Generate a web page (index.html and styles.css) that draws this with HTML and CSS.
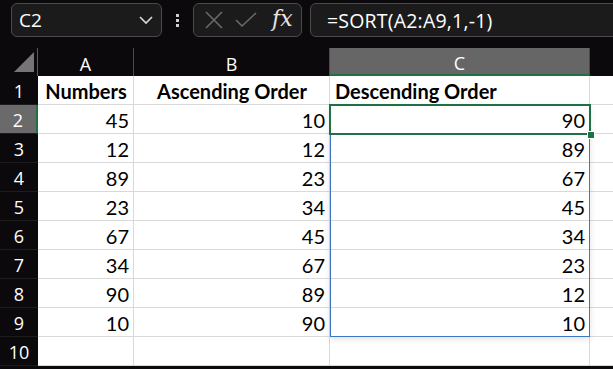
FILE: index.html
```html
<!DOCTYPE html>
<html lang="en">
<head>
    <meta charset="UTF-8">
    <title>SORT descending</title>
    <link rel="stylesheet" href="styles.css">
</head>
<body>
    <div class="toolbar">
        <div class="namebox">
            <span>C2</span>
            <svg width="16" height="10" viewBox="0 0 16 10"><path d="M2 2 L8 8 L14 2" fill="none" stroke="#d8d8d8" stroke-width="1.6"/></svg>
        </div>
        <div class="grip"><i></i><i></i><i></i></div>
        <div class="fxbox">
            <svg width="22" height="22" viewBox="0 0 22 22"><path d="M3 3 L19 19 M19 3 L3 19" stroke="#6a6a6a" stroke-width="1.6"/></svg>
            <svg width="24" height="22" viewBox="0 0 24 22"><path d="M2 11 L8 17 L22 4" fill="none" stroke="#6a6a6a" stroke-width="1.6"/></svg>
            <span class="fx">fx</span>
        </div>
        <div class="formula">=SORT(A2:A9,1,-1)</div>
    </div>

    <div class="sheet">
        <div class="corner"><span class="tri"></span></div>
        <div class="colhead">A</div>
        <div class="colhead">B</div>
        <div class="colhead active">C</div>
        <div class="colhead last"></div>
    </div>
    <div class="sheet" id="rows"></div>

    <script>
        const numbers = [45, 12, 89, 23, 67, 34, 90, 10];
        const asc = [...numbers].sort((a, b) => a - b);
        const desc = [...numbers].sort((a, b) => b - a);
        const rows = document.getElementById('rows');

        function addRow(n, cells) {
            let html = `<div class="rowhead${n === 2 ? ' active' : ''}">${n}</div>`;
            cells.forEach(c => html += `<div class="cell ${c.cls || ''}">${c.text}</div>`);
            html += '<div class="cell last"></div>';
            rows.insertAdjacentHTML('beforeend', html);
        }

        addRow(1, [
            { text: 'Numbers', cls: 'bold center' },
            { text: 'Ascending Order', cls: 'bold center' },
            { text: 'Descending Order', cls: 'bold' }
        ]);
        for (let i = 0; i < 8; i++) {
            addRow(i + 2, [
                { text: numbers[i], cls: 'num' },
                { text: asc[i], cls: 'num' },
                { text: desc[i], cls: 'num' }
            ]);
        }
        addRow(10, [{ text: '' }, { text: '' }, { text: '' }]);

        // spill range, active cell and fill handle drawn over the grid
        rows.insertAdjacentHTML('beforeend',
            '<div class="spill"></div><div class="selected"></div><div class="handle"></div>');
    </script>
</body>
</html>
```

FILE: styles.css
```css
body {
    margin: 0;
    background-color: #0b090b;
    font-family: "Open Sans", "Noto Sans", sans-serif;
    overflow: hidden;
}
.toolbar {
    display: flex;
    align-items: center;
    height: 48px;
    padding: 0 0 8px 11px;
    box-sizing: border-box;
}
.namebox, .fxbox, .formula {
    height: 34px;
    box-sizing: border-box;
    border: 1px solid #4a4a4a;
    border-radius: 6px;
    background-color: #1c1b1c;
    display: flex;
    align-items: center;
}
.namebox {
    width: 151px;
    padding: 0 7px 0 7px;
    justify-content: space-between;
    color: #fff;
    font-size: 19px;
}
.grip {
    width: 31px;
    display: flex;
    flex-direction: column;
    align-items: center;
    gap: 2px;
}
.grip i {
    width: 3px;
    height: 3px;
    background-color: #cfcfcf;
}
.fxbox {
    width: 109px;
    padding: 0 6px 0 9px;
    gap: 9px;
}
.fx {
    font-family: "DejaVu Serif", "Liberation Serif", serif;
    font-style: italic;
    color: #e6e6e6;
    font-size: 22px;
    margin-left: 5px;
    margin-top: -3px;
}
.formula {
    flex: 1;
    margin-left: 8px;
    margin-right: -10px;
    padding-left: 16px;
    color: #fff;
    font-size: 19.5px;
    letter-spacing: 0.2px;
}
.sheet {
    display: grid;
    grid-template-columns: 38px 96px 196px 260px 1fr;
    position: relative;
}
.corner, .colhead {
    height: 28px;
    background-color: #0b090b;
    box-sizing: border-box;
}
.corner {
    position: relative;
    border-right: 1px solid #5a5a5a;
}
.tri {
    position: absolute;
    right: 3px;
    bottom: 4px;
    width: 0;
    height: 0;
    border-left: 20px solid transparent;
    border-bottom: 20px solid #757575;
}
.colhead {
    color: #fff;
    font-size: 18px;
    text-align: center;
    line-height: 32px;
    border-right: 1px solid #4a4a4a;
}
.colhead.active {
    background-color: #666;
    border-bottom: 2px solid #1e7145;
    line-height: 30px;
}
.colhead.last {
    border-right: none;
}
.rowhead {
    height: 29px;
    box-sizing: border-box;
    color: #fff;
    font-size: 18px;
    text-align: center;
    line-height: 30px;
    border-bottom: 1px solid #1c1c1c;
}
.rowhead.active {
    background-color: #6a6a6a;
    border-right: 2px solid #1e7145;
}
.cell {
    height: 29px;
    box-sizing: border-box;
    background-color: #fff;
    border-right: 1px solid #d9d9d9;
    border-bottom: 1px solid #d9d9d9;
    font-family: Lato, "Liberation Sans", sans-serif;
    font-size: 20px;
    line-height: 31px;
    padding: 0 4px 0 5px;
    color: #000;
    white-space: nowrap;
}
.cell.last {
    border-right: none;
}
.bold {
    font-weight: bold;
}
.center {
    text-align: center;
}
.num {
    text-align: right;
}
.spill {
    position: absolute;
    left: 330px;
    top: 29px;
    width: 260px;
    height: 232px;
    border: 1px solid #3f77c4;
    box-sizing: border-box;
    box-shadow: 0 2px 6px rgba(0, 0, 0, 0.12);
}
.selected {
    position: absolute;
    left: 329px;
    top: 28px;
    width: 262px;
    height: 31px;
    border: 2px solid #1e7145;
    box-sizing: border-box;
}
.handle {
    position: absolute;
    left: 587px;
    top: 55px;
    width: 6px;
    height: 6px;
    background-color: #1e7145;
    border: 1px solid #fff;
}
```
